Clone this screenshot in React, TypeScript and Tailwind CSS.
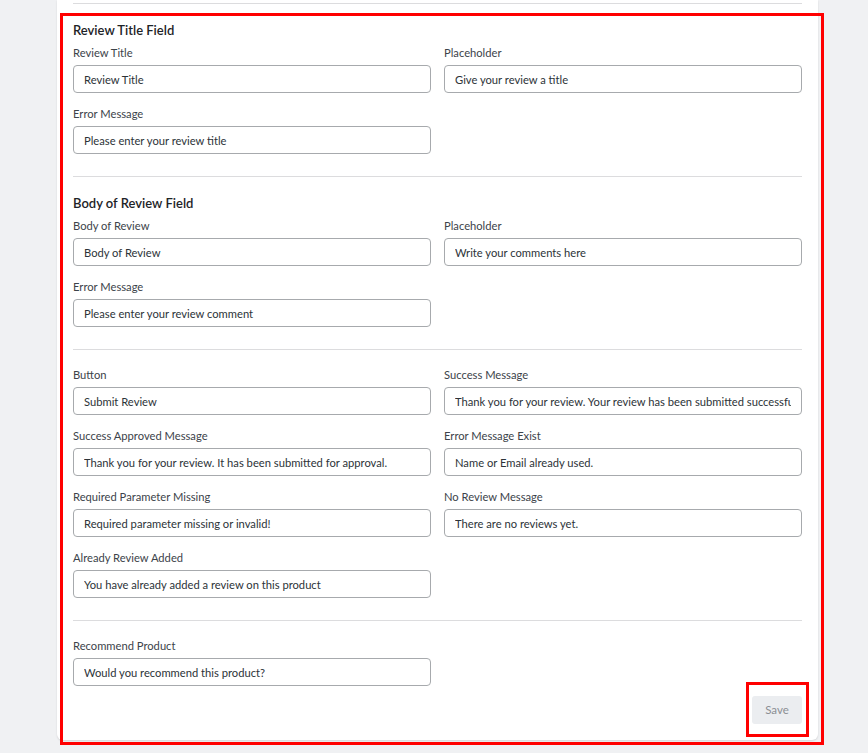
type Field = { label: string; value: string } | null;

const Input = ({ field }: { field: Field }) => {
  if (!field) return <div />;
  return (
    <div className="flex flex-col">
      <label className="mb-[3px] text-[11.2px] leading-[18px] text-[#3c434a]">{field.label}</label>
      <input
        type="text"
        readOnly
        defaultValue={field.value}
        className="h-[28px] w-full rounded-[4px] border border-[#a7aaad] bg-white px-[10px] text-[11.2px] text-[#2c3338] outline-none"
      />
    </div>
  );
};

const Section = ({
  heading,
  fields,
  last,
}: {
  heading?: string;
  fields: Field[];
  last?: boolean;
}) => {
  return (
    <div className={`border-t border-[#dcdcde] pt-4 ${last ? "" : "pb-[22px]"}`}>
      {heading && (
        <h3 className="mb-1 text-[13px] font-semibold leading-[20px] text-[#1d2327]">{heading}</h3>
      )}
      <div className="grid grid-cols-2 gap-x-[13px] gap-y-3">
        {fields.map((f, i) => (
          <Input key={i} field={f} />
        ))}
      </div>
    </div>
  );
};

export default function App() {
  return (
    <div className="relative min-h-[753px] bg-[#f0f1f3] font-['Lato',sans-serif]">
      <div className="ml-[57px] w-[761px] rounded-b-md bg-white px-4 pb-4 shadow-[0_1px_2px_rgba(0,0,0,0.12)]">
        <div className="h-[3px]" />
        <Section
          heading="Review Title Field"
          fields={[
            { label: "Review Title", value: "Review Title" },
            { label: "Placeholder", value: "Give your review a title" },
            { label: "Error Message", value: "Please enter your review title" },
            null,
          ]}
        />
        <Section
          heading="Body of Review Field"
          fields={[
            { label: "Body of Review", value: "Body of Review" },
            { label: "Placeholder", value: "Write your comments here" },
            { label: "Error Message", value: "Please enter your review comment" },
            null,
          ]}
        />
        <Section
          fields={[
            { label: "Button", value: "Submit Review" },
            {
              label: "Success Message",
              value: "Thank you for your review. Your review has been submitted successfully.",
            },
            {
              label: "Success Approved Message",
              value: "Thank you for your review. It has been submitted for approval.",
            },
            { label: "Error Message Exist", value: "Name or Email already used." },
            { label: "Required Parameter Missing", value: "Required parameter missing or invalid!" },
            { label: "No Review Message", value: "There are no reviews yet." },
            { label: "Already Review Added", value: "You have already added a review on this product" },
            null,
          ]}
        />
        <Section
          last
          fields={[{ label: "Recommend Product", value: "Would you recommend this product?" }, null]}
        />
        <div className="mt-[10px] flex justify-end">
          <button className="h-[28px] w-[50px] rounded-[3px] bg-[#ebedf0] text-[11.5px] text-[#8c8f94]">
            Save
          </button>
        </div>
      </div>

      {/* annotation boxes */}
      <div className="pointer-events-none absolute left-[60px] top-[13px] h-[732px] w-[764px] border-[3px] border-[#ff0000]" />
      <div className="pointer-events-none absolute left-[746px] top-[682px] h-[55px] w-[63px] border-[3px] border-[#ff0000]" />
    </div>
  );
}
